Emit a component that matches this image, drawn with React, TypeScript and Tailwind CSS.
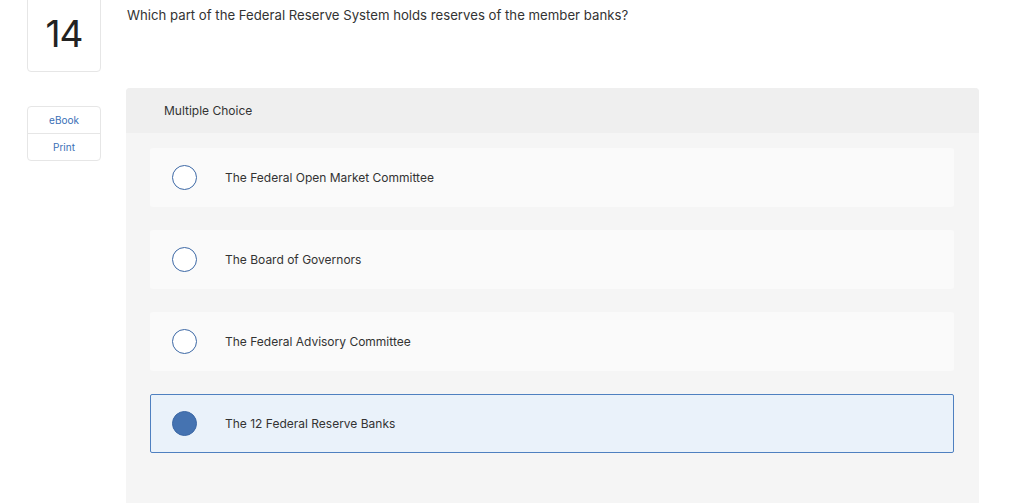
import React from 'react';

const choices = [
  'The Federal Open Market Committee',
  'The Board of Governors',
  'The Federal Advisory Committee',
  'The 12 Federal Reserve Banks',
];

export default function App() {
  const selected = 3;

  return (
    <div className="bg-white w-[1024px] h-[503px] overflow-hidden flex text-[#333] font-['Inter',sans-serif]">
      {/* Left rail: question number + tools */}
      <div className="w-[126px] shrink-0 pl-[27px] pr-[25px]">
        <div className="h-[76px] -mt-[4px] border border-[#e6e6e6] rounded-[4px] flex items-center justify-center">
          <span className="text-[37px] leading-none text-[#222] -mt-[2px] tracking-[-1px]">14</span>
        </div>
        <div className="mt-[34px] border border-[#e6e6e6] rounded-[4px] flex flex-col text-[10px] text-[#3a6fb6]">
          <div className="h-[27px] flex items-center justify-center border-b border-[#e6e6e6]">eBook</div>
          <div className="h-[26px] flex items-center justify-center">Print</div>
        </div>
      </div>

      {/* Question + answers */}
      <div className="flex-1 pr-[45px]">
        <p className="text-[13.2px] mt-[6px] ml-[1px] leading-[18px]">
          Which part of the Federal Reserve System holds reserves of the member banks?
        </p>

        <div className="mt-[64px] bg-[#f5f5f5] rounded-t-[4px] h-[420px]">
          <div className="h-[45px] bg-[#efefef] rounded-t-[4px] flex items-center pl-[38px] text-[12px]">
            Multiple Choice
          </div>
          <div className="pl-[24px] pr-[25px] pt-[15px] flex flex-col gap-[23px]">
            {choices.map((c, i) => (
              <div
                key={c}
                className={
                  i === selected
                    ? 'h-[59px] rounded-[2px] border border-[#4f80c0] bg-[#eaf2fa] flex items-center pl-[21px]'
                    : 'h-[59px] rounded-[3px] border border-transparent bg-[#fafafa] flex items-center pl-[21px]'
                }
              >
                <span
                  className={
                    i === selected
                      ? 'w-[25px] h-[25px] rounded-full bg-[#4573b1] border border-[#3c68a5]'
                      : 'w-[25px] h-[25px] rounded-full bg-white border border-[#3c68a5]'
                  }
                />
                <span className="ml-[28px] text-[12px] leading-none mt-[1px]">{c}</span>
              </div>
            ))}
          </div>
        </div>
      </div>
    </div>
  );
}
